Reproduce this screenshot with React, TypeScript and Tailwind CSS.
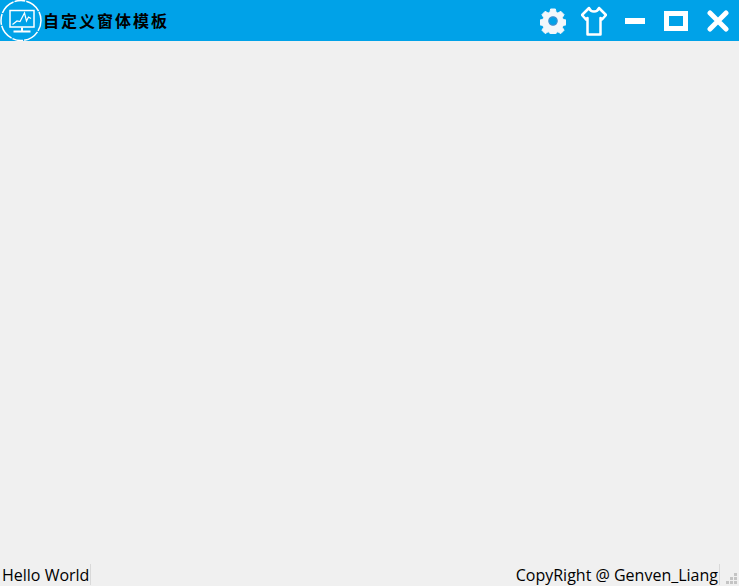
function LogoIcon() {
  return (
    <svg width="42" height="41" viewBox="0 0 42 41" fill="none" stroke="#fff" className="shrink-0">
      <circle cx="21" cy="20.5" r="20" strokeWidth="1.5" strokeDasharray="11 1 16 1" />
      <rect x="10" y="10.5" width="24" height="16.500" strokeWidth="1.5" />
      <path d="M12.500 24.500l4.500-3.500 3 .5 4.500-8.500 2 8 2-4 2.500 1.500" strokeWidth="1.2" />
      <path d="M22 27.500v3.500M13.500 31.500h17" strokeWidth="2" />
    </svg>
  );
}

function GearIcon() {
  return (
    <svg width="26" height="26" viewBox="0 0 26 26">
      <path
        fill="#f2f7fb"
        d="M10.6 1h4.8l.7 3.3 1.8.8 2.9-1.8 3.3 3.4-1.8 2.8.8 1.900 3 .7v4.700l-3 .7-.8 1.900 1.800 2.800-3.300 3.400-2.900-1.800-1.800.8-.7 3.200h-4.800l-.7-3.200-1.800-.8-2.900 1.800-3.300-3.400 1.800-2.800-.8-1.900-3-.7v-4.700l3-.7.8-1.900-1.800-2.800 3.300-3.400 2.900 1.800 1.800-.8z"
        strokeLinejoin="round"
        stroke="#f2f7fb"
      />
      <circle cx="13" cy="13" r="4.200" fill="#00a2e8" stroke="#3d8fd1" strokeWidth="1.200" />
    </svg>
  );
}

function ShirtIcon() {
  return (
    <svg width="26" height="30" viewBox="0 0 26 30" fill="none" stroke="#fff" strokeWidth="2.500">
      <path d="M8 2c1 2.500 3 3.500 5 3.500S17 4.500 18 2l7 7-4 4.500-1.500-1.500V28.500H6.500V12L5 13.500 1 9z" strokeLinejoin="round" />
    </svg>
  );
}

const barButton = "flex h-[41px] w-[41px] items-center justify-center";
const gripDot = "h-[3px] w-[3px] bg-[#c4c4c4]";

export default function App() {
  return (
    <div className="flex h-[586px] w-[739px] flex-col overflow-hidden bg-[#f0f0f0] font-['Open_Sans','Liberation_Sans',sans-serif] text-black">
      <header className="flex h-[41px] shrink-0 items-center bg-[#00a2e8]">
        <LogoIcon />
        <h1 className="ml-[1px] flex-1 font-['Noto_Sans_CJK_SC',sans-serif] text-[16px] leading-[41px] font-bold tracking-[2px]">
          自定义窗体模板
        </h1>
        <div className="flex">
          <button className={barButton}>
            <GearIcon />
          </button>
          <button className={barButton}>
            <ShirtIcon />
          </button>
          <button className={barButton}>
            <span className="h-[6px] w-[20px] bg-white" />
          </button>
          <button className={barButton}>
            <span className="h-[20px] w-[24px] border-[5px] border-white" />
          </button>
          <button className="flex h-[41px] w-[43px] items-center justify-center">
            <svg width="22" height="22" viewBox="0 0 22 22" stroke="#fff" strokeWidth="5" strokeLinecap="round">
              <path d="M3 3l16 16M19 3L3 19" />
            </svg>
          </button>
        </div>
      </header>
      <main className="flex-1" />
      <footer className="relative flex h-[23px] shrink-0 items-center justify-between text-[16px] leading-[22px]">
        <div className="ml-[2px] flex h-[21px] items-center border-r border-[#d9d9d9] pr-px">
          <span>Hello World</span>
        </div>
        <div className="mr-[19px] flex h-[21px] items-center border-r border-[#d9d9d9] pr-px">
          <span>CopyRight @ Genven_Liang</span>
        </div>
        <div className="absolute right-[2px] bottom-[2px] grid grid-cols-3 gap-px">
          <span />
          <span />
          <span className={gripDot} />
          <span />
          <span className={gripDot} />
          <span className={gripDot} />
          <span className={gripDot} />
          <span className={gripDot} />
          <span className={gripDot} />
        </div>
      </footer>
    </div>
  );
}
